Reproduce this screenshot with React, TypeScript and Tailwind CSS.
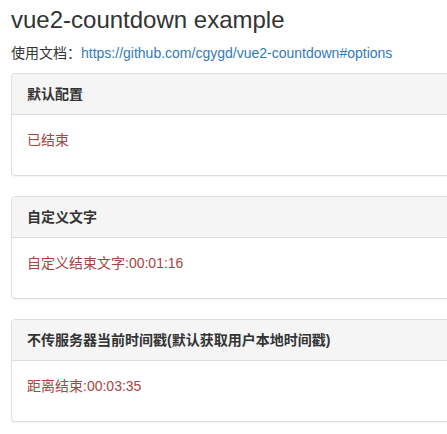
import React from 'react';

type Demo = {
  title: string;
  text: string;
};

const demos: Demo[] = [
  { title: '默认配置', text: '已结束' },
  { title: '自定义文字', text: '自定义结束文字:00:01:16' },
  { title: '不传服务器当前时间戳(默认获取用户本地时间戳)', text: '距离结束:00:03:35' }
];

function Panel({ title, text }: Demo) {
  return (
    <div className="mb-5 rounded-[4px] border border-[#ddd] bg-white shadow-[0_1px_1px_rgba(0,0,0,0.05)]">
      <div className="rounded-t-[3px] border-b border-[#ddd] bg-[#f5f5f5] px-[15px] py-[10px]">
        <h3 className="text-sm leading-5 font-bold text-[#333]">{title}</h3>
      </div>
      <div className="p-[15px]">
        <p className="mb-[10px] text-[#a94442]">{text}</p>
      </div>
    </div>
  );
}

export default function App() {
  return (
    <div className="h-screen w-screen overflow-hidden bg-white font-['Liberation_Sans','Noto_Sans_CJK_SC',sans-serif] text-sm leading-5 text-[#333]">
      <div className="w-[720px] pt-[7px] pl-[11px]">
        <h3 className="mb-[10px] text-2xl leading-[1.1] font-normal">vue2-countdown example</h3>
        <p className="mb-[10px]">
          使用文档：
          <a href="#options" className="text-[#337ab7]">
            https://github.com/cgygd/vue2-countdown#options
          </a>
        </p>
        {demos.map((demo) => (
          <Panel key={demo.title} {...demo} />
        ))}
      </div>
    </div>
  );
}
